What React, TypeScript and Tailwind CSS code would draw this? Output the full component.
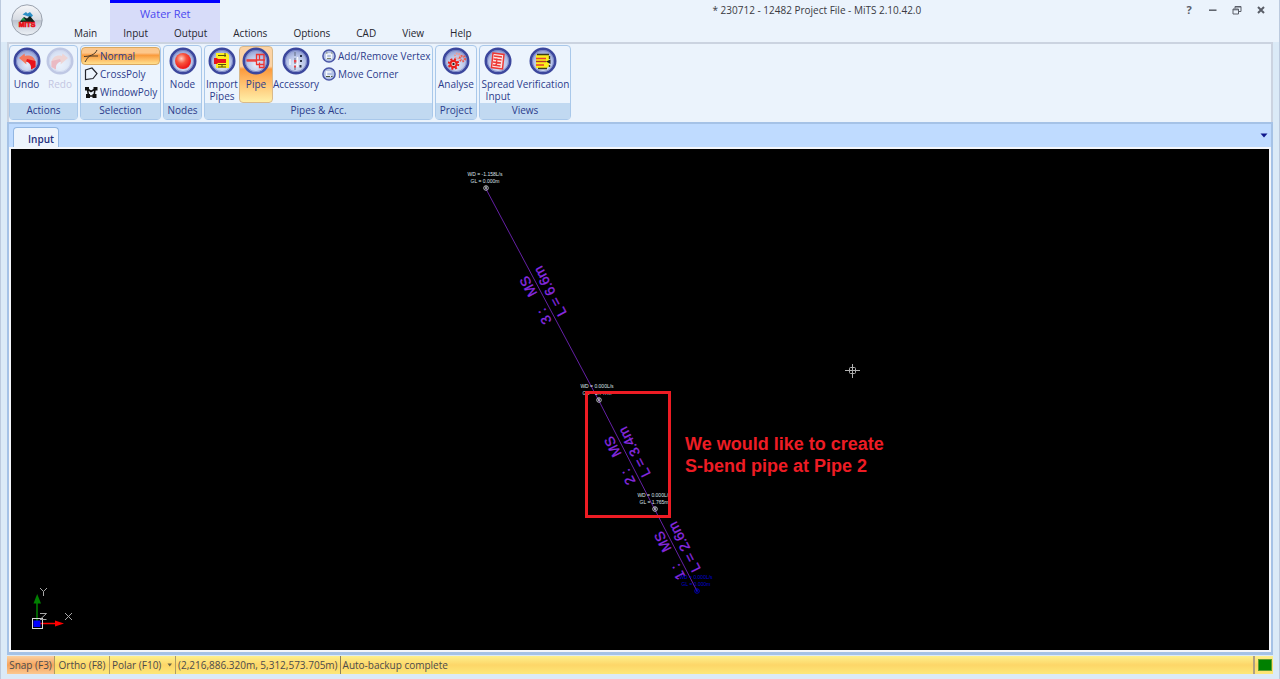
import type { ReactNode } from "react";

type Pipe = {
  id: number;
  length: string;
  from: [number, number];
  to: [number, number];
  label: [number, number];
  angle: number;
};

type NetworkNode = {
  x: number;
  y: number;
  labelX: number;
  wd: string;
  gl: string;
  color: string;
};

const pipes: Pipe[] = [
  { id: 3, length: "6.6m", from: [475, 40], to: [587, 250], label: [556, 164], angle: -118 },
  { id: 2, length: "3.4m", from: [587, 250], to: [643, 359], label: [640, 325], angle: -117 },
  { id: 1, length: "2.6m", from: [643, 359], to: [686, 442], label: [690, 420], angle: -117 },
];

const nodes: NetworkNode[] = [
  { x: 475, y: 39, labelX: 474, wd: "-1.158L/s", gl: "0.000m", color: "#dfe3ea" },
  { x: 588, y: 251, labelX: 586, wd: "0.000L/s", gl: "1.747m", color: "#dfe3ea" },
  { x: 644, y: 360, labelX: 643, wd: "0.000L/s", gl: "1.765m", color: "#dfe3ea" },
  { x: 686, y: 442, labelX: 685, wd: "0.000L/s", gl: "0.000m", color: "#0000d8" },
];

const RoundIcon = ({ children, faded = false }: { children: ReactNode; faded?: boolean }) => (
  <svg viewBox="0 0 28 28" className={`h-7 w-7 shrink-0 ${faded ? "opacity-25" : ""}`} aria-hidden="true">
    <defs>
      <radialGradient id="disc" cx="50%" cy="65%" r="60%">
        <stop offset="0" stopColor="#e6edfa" />
        <stop offset="0.6" stopColor="#b9c5e8" />
        <stop offset="1" stopColor="#8d9ad0" />
      </radialGradient>
    </defs>
    <circle cx="14" cy="14" r="12.2" fill="url(#disc)" stroke="#3c479d" strokeWidth="2.6" />
    <circle cx="14" cy="14" r="10.6" fill="none" stroke="#7380c2" strokeWidth="0.8" />
    {children}
  </svg>
);

const UndoArrow = () => (
  <>
    <path d="M6 11 11.5 6.5 12 9C17 7.5 22.5 10 22.5 16V20L18 22.5C18.5 17 17 14.5 13 14.5L13.5 17.5Z" fill="#f4795f" />
    <path d="M22.5 14V20L18 22.5C18.3 18.5 17.5 16 13 14.500L14 12Z" fill="#e8121c" />
  </>
);

const SmallDisc = ({ children }: { children: ReactNode }) => (
  <svg viewBox="0 0 14 14" className="h-3.5 w-3.5 shrink-0" aria-hidden="true">
    <circle cx="7" cy="7" r="6.1" fill="#b4c2e4" stroke="#4a56a6" strokeWidth="1.5" />
    {children}
  </svg>
);

const RibbonGroup = ({ title, width, children }: { title: string; width: string; children: ReactNode }) => (
  <section className={`flex shrink-0 flex-col rounded-sm border border-[#a9c8ea] bg-[#ecf4fd] ${width}`}>
    <div className="flex h-[57px] items-start">{children}</div>
    <h2 className="h-4 bg-[#c1d9f1] text-center leading-[14px]">{title}</h2>
  </section>
);

const BigButton = ({
  label,
  icon,
  width,
  active = false,
  disabled = false,
}: {
  label: ReactNode;
  icon: ReactNode;
  width: string;
  active?: boolean;
  disabled?: boolean;
}) => (
  <button
    type="button"
    disabled={disabled}
    className={`flex h-[57px] shrink-0 flex-col items-center whitespace-nowrap rounded-sm border leading-3 ${width} ${
      active
        ? "border-[#d9b98a] bg-linear-to-b from-[#fcd3a4] from-35% via-[#fb9a3a] via-40% to-[#fff0a8]"
        : "border-transparent"
    } ${disabled ? "text-[#c3c6e2]" : ""}`}
  >
    {icon}
    <span className="mt-[3px]">{label}</span>
  </button>
);

const SmallButton = ({ label, icon, active = false }: { label: string; icon: ReactNode; active?: boolean }) => (
  <button
    type="button"
    className={`flex h-[18px] w-full items-center gap-0.5 whitespace-nowrap border px-0.5 ${
      active
        ? "rounded-sm border-[#d9a860] bg-linear-to-b from-[#fcc78c] from-30% via-[#f99a3a] via-45% to-[#ffdf8c]"
        : "border-transparent"
    }`}
  >
    {icon}
    {label}
  </button>
);

const MenuTab = ({ label }: { label: string }) => (
  <button type="button" className="h-[18px] px-[13px] text-[#26262e]">
    {label}
  </button>
);

const Header = () => (
  <header className="flex h-[42px] bg-[#ebf3fc]">
    <div className="w-[60px] shrink-0 pt-1 pl-2.5">
      <svg viewBox="0 0 32 32" className="h-8 w-8" role="img" aria-label="MiTS">
        <defs>
          <linearGradient id="orb" x1="0" y1="0" x2="0" y2="1">
            <stop offset="0" stopColor="#f6f7f9" />
            <stop offset="0.48" stopColor="#d8dce3" />
            <stop offset="0.52" stopColor="#bcc3cf" />
            <stop offset="1" stopColor="#eef2f7" />
          </linearGradient>
        </defs>
        <circle cx="16" cy="16" r="15.2" fill="url(#orb)" stroke="#9aa2ae" />
        <path d="M11.5 10.5 15 8 16.5 9.5 19 8 22 11.5 20 13.500 16 12Z" fill="#2d8fc4" />
        <path d="M8.500 18 13 13 16 14.500 19 12 24 18Z" fill="#14231c" />
        <path d="M10 16.500 12.500 13.500 15 16.500Z" fill="#1c9a4a" />
        <text x="16" y="23" textAnchor="middle" fontSize="7" fontWeight="bold" fill="#e8141c" stroke="#e8141c" strokeWidth="0.7" fontFamily="Liberation Sans, sans-serif">
          MiTS
        </text>
      </svg>
    </div>
    <nav className="flex items-end" aria-label="Ribbon tabs">
      <MenuTab label="Main" />
      <div className="flex h-full flex-col justify-between border-t-[3px] border-[#0000ff] bg-[#d7dcf9]">
        <span className="pt-1 text-center text-[11px] leading-[14px] text-[#4a48f0]">Water Ret</span>
        <div className="flex">
          <MenuTab label="Input" />
          <MenuTab label="Output" />
        </div>
      </div>
      <MenuTab label="Actions" />
      <MenuTab label="Options" />
      <MenuTab label="CAD" />
      <MenuTab label="View" />
      <MenuTab label="Help" />
    </nav>
    <h1 className="flex-1 pt-[3px] pr-8 text-center text-[#3a3a42]">* 230712 - 12482 Project File - MiTS 2.10.42.0</h1>
    <div className="flex h-5 items-center gap-2 pr-2.5 text-[#5a5e68]">
      <button type="button" aria-label="Help" className="w-4 text-[11px] font-bold">
        ?
      </button>
      <button type="button" aria-label="Minimize" className="flex w-4 justify-center">
        <svg viewBox="0 0 10 10" className="h-2.5 w-2.5" stroke="currentColor" strokeWidth="1.5">
          <path d="M1 5.2H8.500" />
        </svg>
      </button>
      <button type="button" aria-label="Restore" className="flex w-4 justify-center">
        <svg viewBox="0 0 10 10" className="h-2.5 w-2.5" fill="none" stroke="currentColor">
          <path d="M1 4H6.500V9H1ZM1 4.800H6.500M3 3.500V1.500H9V6.500H7M3 2H9" />
        </svg>
      </button>
      <button type="button" aria-label="Close" className="flex w-4 justify-center">
        <svg viewBox="0 0 10 10" className="h-2.5 w-2.5" stroke="currentColor" strokeWidth="2">
          <path d="M2 2 8 8M8 2 2 8" />
        </svg>
      </button>
    </div>
  </header>
);

const Ribbon = () => (
  <div className="flex gap-0.5 border-2 border-b-0 border-[#cbd3e0] bg-[#ebf3fc] pt-px pb-0.5 text-[#2c3c8c]">
    <RibbonGroup title="Actions" width="w-[69px]">
      <BigButton label="Undo" width="w-[33px]" icon={<RoundIcon><UndoArrow /></RoundIcon>} />
      <BigButton
        label="Redo"
        width="w-[34px]"
        disabled
        icon={
          <RoundIcon faded>
            <g transform="matrix(-1 0 0 1 28 0)">
              <UndoArrow />
            </g>
          </RoundIcon>
        }
      />
    </RibbonGroup>

    <RibbonGroup title="Selection" width="w-[81px]">
      <div className="flex w-full flex-col pt-px">
        <SmallButton
          active
          label="Normal"
          icon={
            <svg viewBox="0 0 14 14" className="h-3.5 w-3.5 shrink-0" fill="none" stroke="#4a3a28">
              <path d="M0 7.500C5 7.500 11 6 13 1M1 13C3 10 4 7 7 7H14" />
            </svg>
          }
        />
        <SmallButton
          label="CrossPoly"
          icon={
            <svg viewBox="0 0 14 14" className="h-3.5 w-3.5 shrink-0" fill="none" stroke="#22242c" strokeWidth="1.2">
              <path d="M1.500 3 8 1 13 6.500 9 11.500 1.500 12.500Z" />
            </svg>
          }
        />
        <SmallButton
          label="WindowPoly"
          icon={
            <svg viewBox="0 0 14 14" className="h-3.5 w-3.5 shrink-0">
              <path d="M3.500 4 7 6.500 11 4 10 11H4.500Z" fill="none" stroke="#111" strokeWidth="1.6" />
              <path d="M1 2H5V5.500H1ZM9.500 2H13.500V5.500H9.500ZM2 9H6V13H2ZM8.500 9H12.500V13H8.500Z" fill="#111" />
            </svg>
          }
        />
      </div>
    </RibbonGroup>

    <RibbonGroup title="Nodes" width="w-[39px]">
      <BigButton
        label="Node"
        width="w-full"
        icon={
          <RoundIcon>
            <defs>
              <radialGradient id="ball" cx="40%" cy="35%" r="60%">
                <stop offset="0" stopColor="#ffd0c4" />
                <stop offset="0.5" stopColor="#f8543c" />
                <stop offset="1" stopColor="#ee1c1c" />
              </radialGradient>
            </defs>
            <circle cx="14" cy="14" r="8" fill="url(#ball)" />
          </RoundIcon>
        }
      />
    </RibbonGroup>

    <RibbonGroup title="Pipes &amp; Acc." width="w-[229px]">
      <BigButton
        label={<>Import<br />Pipes</>}
        width="w-[34px]"
        icon={
          <RoundIcon>
            <path d="M8 6H19L21 8V21H8Z" fill="#fbf01e" />
            <path d="M10 8.500H18M17 6V10M10 17.500H18M10 20H18M14 17.500V20" stroke="#55500c" fill="none" />
            <path d="M6 11H9L10 12H18V16H10L9 17H6Z" fill="#e8141c" />
          </RoundIcon>
        }
      />
      <BigButton
        active
        label="Pipe"
        width="w-[34px]"
        icon={
          <RoundIcon>
            <path d="M4.500 13H23M14.500 13V7.500H22V20.500H17.500V15.500M14.500 13V17.500H22M17.500 7.500V13" fill="none" stroke="#ee3430" strokeWidth="1.3" />
            <path d="M4.500 14H14" stroke="#ee3430" strokeWidth="1.3" />
          </RoundIcon>
        }
      />
      <BigButton
        label="Accessory"
        width="w-[46px]"
        icon={
          <RoundIcon>
            <path d="M13 5V9M13 11V17M13 19V23" stroke="#6f7a92" strokeWidth="1.2" />
            <path d="M12 13H14.500V15.500H12ZM12 18.500H14V20.500H12Z" fill="#e8444a" />
            <path d="M18 8H20V10H18ZM18 13H20V15H18ZM17.500 18H19.500V20.500H17.500Z" fill="#2c3348" />
            <path d="M8 12V18M15.500 10V20" stroke="#f4f7fc" strokeWidth="1.5" />
          </RoundIcon>
        }
      />
      <div className="flex flex-col pt-px">
        <SmallButton
          label="Add/Remove Vertex"
          icon={
            <SmallDisc>
              <path d="M4 5H10M4.500 5V9H9.500V5" fill="none" stroke="#f7fafc" strokeWidth="1.5" />
              <path d="M4 4H5.500M9 4H10.500M5 9.500H9" stroke="#7c8468" />
            </SmallDisc>
          }
        />
        <SmallButton
          label="Move Corner"
          icon={
            <SmallDisc>
              <path d="M4.500 4V9H9.500M5 5H9.500" fill="none" stroke="#f7fafc" strokeWidth="1.5" />
              <path d="M4 9.500H8M9 9.500H10.500" stroke="#4d5a3c" strokeWidth="1.2" />
            </SmallDisc>
          }
        />
      </div>
    </RibbonGroup>

    <RibbonGroup title="Project" width="w-[42px]">
      <BigButton
        label="Analyse"
        width="w-full"
        icon={
          <RoundIcon>
            <circle cx="15.500" cy="9" r="2.500" fill="none" stroke="#f29a90" strokeWidth="2" strokeDasharray="1.5 1" />
            <circle cx="20.500" cy="11.500" r="2.500" fill="none" stroke="#ee5a4c" strokeWidth="2.5" strokeDasharray="1.5 1" />
            <circle cx="11.500" cy="17" r="4.800" fill="none" stroke="#e8201c" strokeWidth="2" strokeDasharray="2 1.77" />
            <circle cx="11.500" cy="17" r="4.200" fill="#e8201c" />
            <circle cx="11.500" cy="17" r="2" fill="#fff" />
            <circle cx="11.500" cy="17" r="1.200" fill="#222" />
          </RoundIcon>
        }
      />
    </RibbonGroup>

    <RibbonGroup title="Views" width="w-[92px]">
      <BigButton
        label={<>Spread<br />Input</>}
        width="w-9"
        icon={
          <RoundIcon>
            <path d="M9 6 20 7.500 18.500 22 7.500 20.500Z" fill="#fbe4e2" stroke="#ee3834" strokeWidth="1.5" />
            <path d="M10 9 18 10M9.500 12 17.500 13M9 15 17 16M8.800 18 16.500 19M13 11.500 12 19" stroke="#ee3834" strokeWidth="1.3" />
          </RoundIcon>
        }
      />
      <BigButton
        label="Verification"
        width="w-[54px]"
        icon={
          <RoundIcon>
            <path d="M7 8H20V19L18 21H7Z" fill="#fbee1c" />
            <path d="M8 7.500H20M9 21.500H18M20.500 9V12M20.500 18V20" stroke="#3c3a14" strokeWidth="1.4" />
            <path d="M7 11.500H17M7 18H15" stroke="#e8402c" strokeWidth="1.4" />
            <path d="M7 14.500H17" stroke="#b8342c" strokeWidth="1.4" />
            <path d="M17 14.500 21.500 12.500V17Z" fill="#1c1c1c" />
          </RoundIcon>
        }
      />
    </RibbonGroup>
  </div>
);

const NodeMarker = ({ node }: { node: NetworkNode }) => (
  <g fill={node.color} fontSize="5" textAnchor="middle">
    <text x={node.labelX} y={node.y - 12}>{`WD = ${node.wd}`}</text>
    <text x={node.labelX} y={node.y - 5}>{`GL = ${node.gl}`}</text>
    <g fill="none" stroke={node.color} strokeWidth="0.8">
      <circle cx={node.x} cy={node.y} r="2.3" />
      <path d={`M${node.x} ${node.y - 2}v3M${node.x - 1} ${node.y}h2`} />
    </g>
  </g>
);

const Canvas = () => (
  <main className="relative flex-1 overflow-hidden bg-black">
    <svg className="absolute inset-0 h-full w-full" fontFamily="Liberation Sans, Arial, sans-serif" role="img" aria-label="Pipe network">
      {pipes.map((pipe) => (
        <g key={pipe.id} fill="#8a2be2">
          <line x1={pipe.from[0]} y1={pipe.from[1]} x2={pipe.to[0]} y2={pipe.to[1]} stroke="#6420a4" />
          <g
            transform={`translate(${pipe.label[0]} ${pipe.label[1]}) rotate(${pipe.angle})`}
            fontSize="14"
            stroke="#8a2be2"
            strokeWidth="0.3"
          >
            <text>{`L = ${pipe.length}`}</text>
            <text y="-17">{`${pipe.id} :\u00a0\u00a0\u00a0\u00a0MS`}</text>
          </g>
        </g>
      ))}
      {nodes.map((node) => (
        <NodeMarker key={`${node.x}-${node.y}`} node={node} />
      ))}
      <rect x="575.500" y="243.500" width="83" height="124" fill="none" stroke="#ed1c24" strokeWidth="3" />
      <g fill="none" stroke="#b0b0b0">
        <path d="M841.500 215V229M834 221.500H849" />
        <rect x="838.500" y="218.500" width="6" height="6" rx="1" />
      </g>
    </svg>
    <p className="absolute top-[284px] left-[674px] font-['Liberation_Sans',Arial,sans-serif] text-[18px] leading-[22px] font-bold text-[#ed1c24]">
      We would like to create
      <br />
      S-bend pipe at Pipe 2
    </p>
    <svg viewBox="0 0 50 46" className="absolute bottom-4 left-[19px] h-[46px] w-[50px]" fill="none" aria-hidden="true">
      <path d="M7 37V14" stroke="#008000" strokeWidth="1.5" />
      <path d="M3.500 15.500H11L7.200 6Z" fill="#008000" />
      <path d="M10 35.500H27" stroke="#ff0000" strokeWidth="1.5" />
      <path d="M25 32.500V38.500L34 35.500Z" fill="#ff0000" />
      <path d="M3.500 32.500H10.500V39H3.500Z" fill="#0000ff" />
      <rect x="2.500" y="30.500" width="10" height="10" stroke="#d8d8d8" />
      <path d="M10 25.500H16.500L10 31.500H16.500" stroke="#a8a8a8" />
      <path d="M10 0 13.500 3.500 17 0M13.500 3.500V8M35 25 42 32M42 25 35 32" stroke="#a8a8a8" />
    </svg>
  </main>
);

const StatusBar = () => (
  <footer className="mx-1.5 mt-px mb-[5px] flex h-[18px] items-stretch bg-linear-to-b from-[#fdf08c] via-[#fdd668] to-[#fde878] text-[#4b4a4c]">
    <button type="button" className="w-[47px] bg-linear-to-b from-[#fbd0a0] via-[#f5a45c] to-[#fcc890] whitespace-nowrap">
      Snap (F3)
    </button>
    <button type="button" className="w-[55px] border-l border-[#b09c60] whitespace-nowrap">
      Ortho (F8)
    </button>
    <button type="button" className="flex w-[66px] items-center justify-between border-l border-[#b09c60] px-0.5 whitespace-nowrap">
      Polar (F10)
      <svg viewBox="0 0 6 4" className="h-1 w-1.5" fill="#6a6444">
        <path d="M0.500 0.500H5L2.750 3.500Z" />
      </svg>
    </button>
    <output className="flex items-center border-l border-[#b09c60] px-0.5 whitespace-nowrap">
      (2,216,886.320m, 5,312,573.705m)
    </output>
    <output className="flex flex-1 items-center border-l border-[#8c8058] px-0.5">Auto-backup complete</output>
    <div className="flex w-5 items-center border-l-2 border-[#b0a080] pl-[3px]">
      <span className="h-3 w-3.5 border border-[#5c9c30] bg-[#008000]"></span>
    </div>
  </footer>
);

export default function App() {
  return (
    <div className="flex min-h-screen flex-col border-x border-[#bccade] bg-[#dbeaf7] font-['Open_Sans','Noto_Sans',sans-serif] text-[10px] leading-[14px]">
      <Header />
      <div className="mx-1.5 flex flex-1 flex-col">
        <Ribbon />
        <div className="flex flex-1 flex-col border-2 border-b-[3px] border-[#a5c2e6]">
          <div className="flex h-[23px] items-end justify-between bg-[#bfdbff] pl-1">
            <button type="button" className="h-5 rounded-t border border-b-0 border-[#92b6e2] bg-[#edf4fc] pt-0.5 pr-1 pl-3.5 font-semibold text-[#1f2f7c]">
              Input
            </button>
            <button type="button" aria-label="Tab list" className="flex h-full items-center pr-[3px]">
              <svg viewBox="0 0 8 5" className="h-[5px] w-2" fill="#10188c">
                <path d="M0.500 0.500H7.500L4 4.500Z" />
              </svg>
            </button>
          </div>
          <div className="flex flex-1 border-2 border-[#f4f6fa]">
            <Canvas />
          </div>
        </div>
      </div>
      <StatusBar />
    </div>
  );
}
